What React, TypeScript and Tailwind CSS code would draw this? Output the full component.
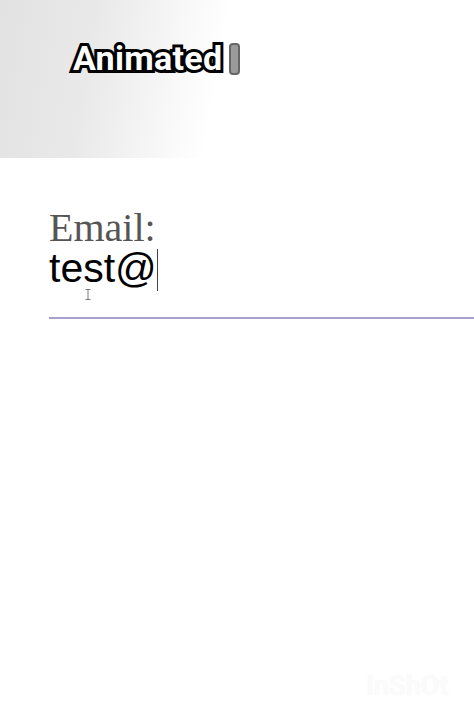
import React from "react";

export default function App() {
  return (
    <div className="relative w-[474px] h-[711px] overflow-hidden bg-white">
      <div className="h-[158px] w-full bg-[linear-gradient(100deg,#e2e2e2_0%,#e9e9e9_20%,#f5f5f5_34%,#ffffff_46%)] pl-[73px] pt-[40px]">
        <div className="flex items-center gap-[7px]">
          <span
            className="text-[34px] font-bold leading-none text-white [font-family:Roboto,'Noto_Sans',sans-serif] [-webkit-text-stroke:6px_#000] [paint-order:stroke_fill] tracking-[0.3px]"
          >
            Animated
          </span>
          <span className="mt-[3px] h-[32px] w-[11px] rounded-[4px] border-2 border-[#666] bg-[#9a9a9a]" />
        </div>
      </div>

      <div className="pl-[49px] pt-[50px]">
        <div className="text-[40px] leading-none text-[#555] [font-family:'Liberation_Serif',serif]">
          Email:
        </div>
        <div className="flex h-[40px] items-start">
          <span className="text-[41px] leading-none text-black [font-family:'Liberation_Sans',Arial,sans-serif]">
            test@
          </span>
          <span className="mt-[1px] h-[42px] w-px bg-[#444]" />
        </div>
        <div className="pl-[36px] pt-[1px]">
          <svg width="6" height="11" viewBox="0 0 6 11" className="block">
            <path d="M0.5 0.5h5M3 0.5v10M0.5 10.5h5" stroke="#7a7a7a" strokeWidth="1" fill="none" />
          </svg>
        </div>
        <div className="mt-[17px] h-[2px] w-full bg-[#a99fcf]" />
      </div>

      <div className="absolute left-[366px] top-[666px] text-[27px] font-bold text-[#fbfbfb] [font-family:Roboto,sans-serif] [text-shadow:0_0_1px_rgba(0,0,0,0.05)]">
        InShOt
      </div>
    </div>
  );
}
